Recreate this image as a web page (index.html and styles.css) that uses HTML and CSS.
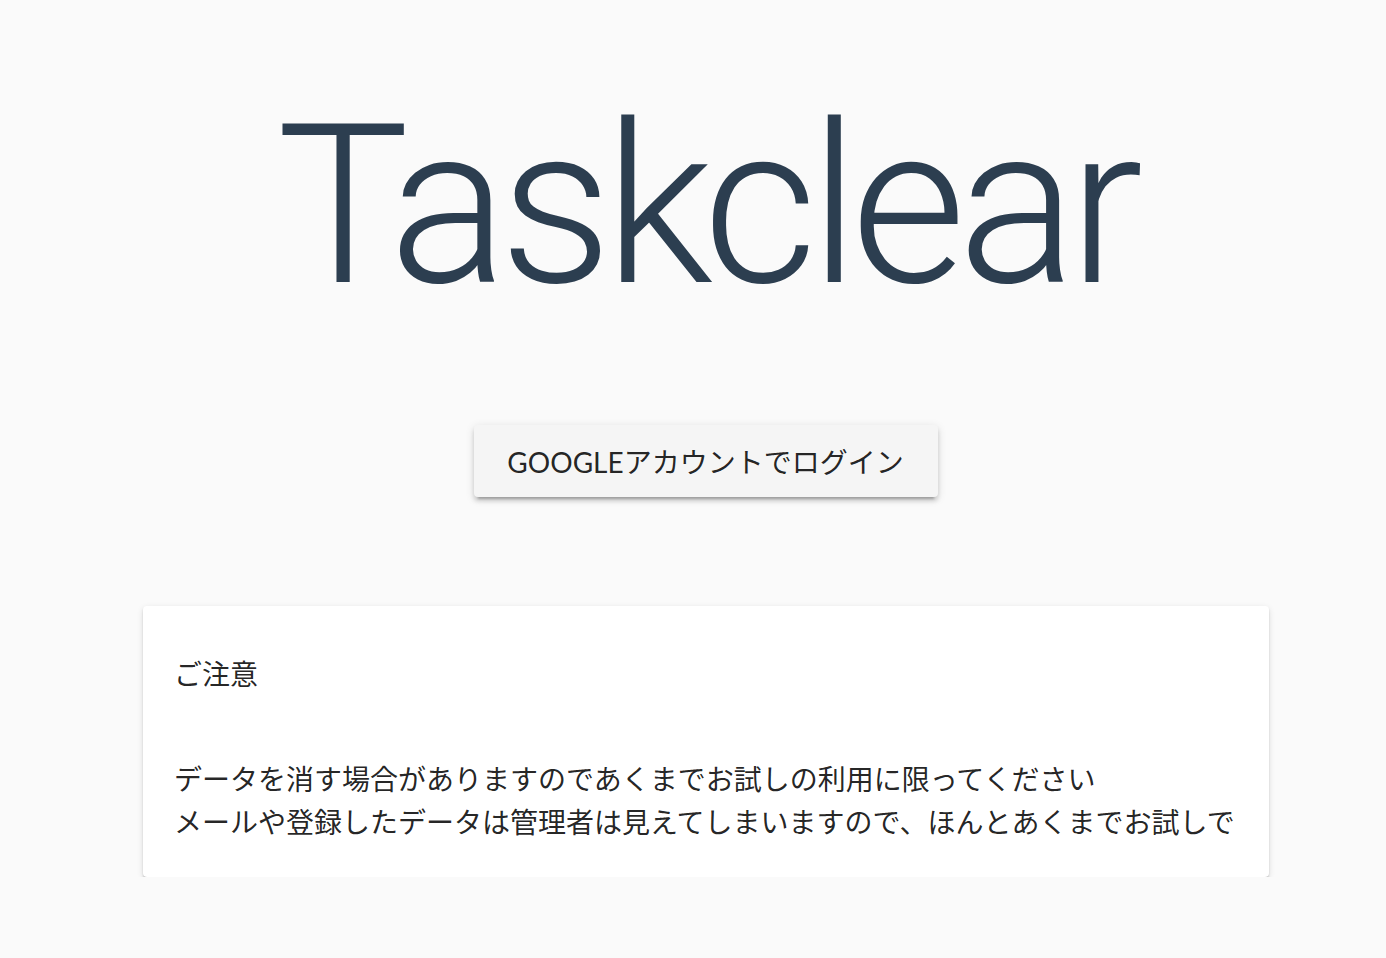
FILE: index.html
```html
<!DOCTYPE html>
<html lang="ja">
<head>
<meta charset="utf-8">
<title>Taskclear</title>
<link rel="stylesheet" href="styles.css">
</head>
<body>
<main class="page">
  <h1 class="brand">Taskclear</h1>
  <button class="login-btn" type="button">GOOGLEアカウントでログイン</button>
  <section class="notice">
    <h2 class="notice-title">ご注意</h2>
    <p class="notice-text">データを消す場合がありますのであくまでお試しの利用に限ってください<br>メールや登録したデータは管理者は見えてしまいますので、ほんとあくまでお試しで</p>
  </section>
</main>
</body>
</html>
```

FILE: styles.css
```css
html, body {
  margin: 0;
  padding: 0;
  background: #fafafa;
}

body {
  font-family: "Noto Sans CJK JP", "Noto Sans", sans-serif;
  color: rgba(0, 0, 0, 0.87);
}

.page {
  display: flex;
  flex-direction: column;
  align-items: center;
  padding: 95px 0 0 26px;
}

.brand {
  margin: 0;
  font-family: Roboto, "Liberation Sans", sans-serif;
  font-weight: 300;
  font-size: 222px;
  line-height: 222px;
  letter-spacing: -0.0365em;
  color: #2c3e50;
}

.login-btn {
  margin-top: 108px;
  height: 72px;
  padding: 0 34px 0 33px;
  border: none;
  border-radius: 4px;
  background: #f5f5f5;
  font-family: "Lato", "Noto Sans CJK JP", sans-serif;
  font-size: 28px;
  color: rgba(0, 0, 0, 0.87);
  box-shadow: 0 6px 2px -4px rgba(0,0,0,.2), 0 4px 4px 0 rgba(0,0,0,.14), 0 2px 10px 0 rgba(0,0,0,.12);
  cursor: pointer;
}

.notice {
  margin-top: 109px;
  width: 1126px;
  box-sizing: border-box;
  padding: 46px 33px 34px 31px;
  background: #fff;
  border-radius: 4px;
  box-shadow: 0 4px 2px -2px rgba(0,0,0,.2), 0 2px 2px 0 rgba(0,0,0,.14), 0 2px 6px 0 rgba(0,0,0,.12);
}

.notice-title {
  margin: 0;
  font-size: 28px;
  font-weight: 400;
  line-height: 43px;
}

.notice-text {
  margin: 62px 0 0;
  font-size: 28px;
  line-height: 43px;
}
```
